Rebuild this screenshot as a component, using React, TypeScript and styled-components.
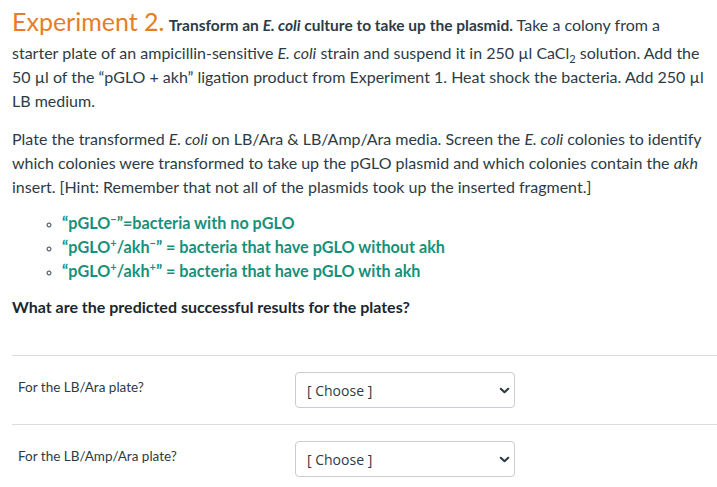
import React from "react";
import styled, { createGlobalStyle } from "styled-components";

const GlobalStyle = createGlobalStyle`
  body {
    margin: 0;
    background: #ffffff;
    font-family: Lato, "Noto Sans", sans-serif;
    color: #2d3b45;
  }
`;

const questions = ["For the LB/Ara plate?", "For the LB/Amp/Ara plate?"];

const App: React.FC = () => {
  return (
    <>
      <GlobalStyle />
      <Page>
        <Text $gap={14}>
          <Heading>Experiment 2.</Heading> <Lead>
            Transform an <em>E. coli</em> culture to take up the plasmid.
          </Lead>{" "}
          Take a colony from a starter plate of an ampicillin-sensitive{" "}
          <em>E. coli</em> strain and suspend it in 250 µl CaCl<sub>2</sub>{" "}
          solution. Add the 50 µl of the “pGLO + akh” ligation product from
          Experiment 1. Heat shock the bacteria. Add 250 µl LB medium.
        </Text>
        <Text $gap={12}>
          Plate the transformed <em>E. coli</em> on LB/Ara &amp; LB/Amp/Ara
          media. Screen the <em>E. coli</em> colonies to identify which
          colonies were transformed to take up the pGLO plasmid and which
          colonies contain the <em>akh</em> insert. [Hint: Remember that not
          all of the plasmids took up the inserted fragment.]
        </Text>
        <Legend>
          <LegendItem>
            “pGLO<Sup>−</Sup>”=bacteria with no pGLO
          </LegendItem>
          <LegendItem>
            “pGLO<Sup>+</Sup>/akh<Sup>−</Sup>” = bacteria that have pGLO
            without akh
          </LegendItem>
          <LegendItem>
            “pGLO<Sup>+</Sup>/akh<Sup>+</Sup>” = bacteria that have pGLO with
            akh
          </LegendItem>
        </Legend>
        <Question>
          What are the predicted successful results for the plates?
        </Question>
        <Answers>
          {questions.map((q) => (
            <AnswerRow key={q}>
              <AnswerLabel>{q}</AnswerLabel>
              <SelectWrap>
                <Select defaultValue="">
                  <option value="">[ Choose ]</option>
                </Select>
                <Chevron viewBox="0 0 10 10" aria-hidden="true">
                  <path
                    d="M1.6 3.4 L5 6.6 L8.4 3.4"
                    fill="none"
                    stroke="#2d3b45"
                    strokeWidth="1.9"
                    strokeLinecap="round"
                    strokeLinejoin="round"
                  />
                </Chevron>
              </SelectWrap>
            </AnswerRow>
          ))}
        </Answers>
      </Page>
    </>
  );
};

const Page = styled.div`
  padding: 3px 0 0 12px;
  font-size: 16px;
  line-height: 1.5;
`;

const Text = styled.p<{ $gap: number }>`
  margin: 0 0 ${(p) => p.$gap}px;
  padding-right: 8px;

  sub {
    font-size: 11px;
    line-height: 0;
  }
`;

const Heading = styled.span`
  color: #e67e23;
  font-size: 25px;
  font-weight: 400;
`;

const Lead = styled.strong`
  font-weight: 700;
  font-size: 15.5px;
`;

const Legend = styled.ul`
  margin: 0 0 12px;
  padding-left: 50px;
  list-style: circle;
  color: #169179;
  font-weight: 700;
  font-size: 16.2px;
`;

const LegendItem = styled.li`
  &::marker {
    color: #2d3b45;
    font-size: 12px;
  }
`;

const Sup = styled.sup`
  font-size: 11px;
  line-height: 0;
`;

const Question = styled.p`
  margin: 0 0 36px;
  font-weight: 700;
  color: #1b2730;
`;

const Answers = styled.div`
  display: flex;
  flex-direction: column;
`;

const AnswerRow = styled.div`
  display: flex;
  align-items: flex-start;
  border-top: 1px solid #dadee1;
  padding: 16px 0;
`;

const AnswerLabel = styled.div`
  width: 277px;
  padding: 5px 0 0 6px;
  font-size: 13.5px;
  line-height: 20px;
  color: #2d3b45;
`;

const SelectWrap = styled.div`
  position: relative;
  width: 220px;
`;

const Select = styled.select`
  appearance: none;
  width: 100%;
  height: 36px;
  padding: 0 28px 0 11px;
  border: 1px solid #c7cdd1;
  border-radius: 4px;
  background: #ffffff;
  font-family: "Open Sans", sans-serif;
  font-size: 14px;
  color: #2d3b45;
`;

const Chevron = styled.svg`
  position: absolute;
  right: 5px;
  top: 13px;
  width: 11px;
  height: 11px;
  pointer-events: none;
`;

export default App;
